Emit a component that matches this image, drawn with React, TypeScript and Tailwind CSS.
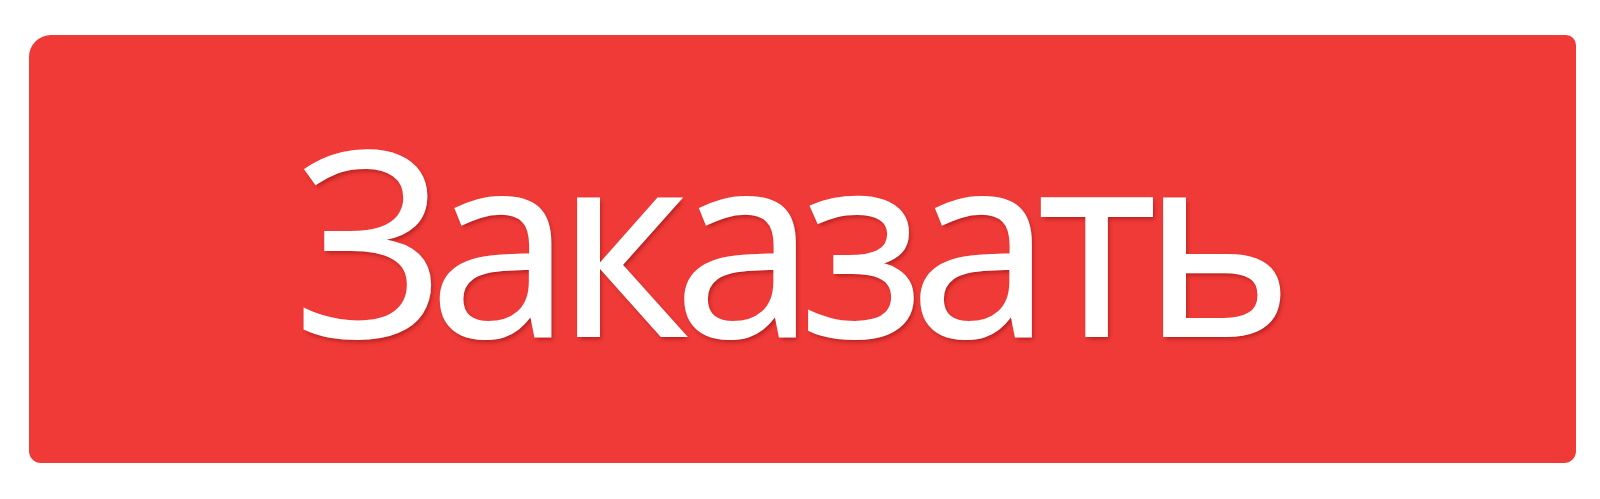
export default function App() {
  return (
    <div className="h-[499px] w-[1600px] bg-white pl-[29px] pt-[35px]">
      <button
        type="button"
        className="flex h-[428px] w-[1547px] items-center justify-center rounded-tl-[22px] rounded-tr-[10px] rounded-b-[12px] bg-[#ef3a37] pr-[32px]"
      >
        <span
          className="block pb-[24px] text-[256px] font-medium leading-none tracking-[-15px] text-white [font-family:'Open_Sans',sans-serif] [-webkit-text-stroke:2px_white] [text-shadow:2px_3px_4px_rgba(110,0,0,0.45)]"
        >
          Заказать
        </span>
      </button>
    </div>
  );
}
